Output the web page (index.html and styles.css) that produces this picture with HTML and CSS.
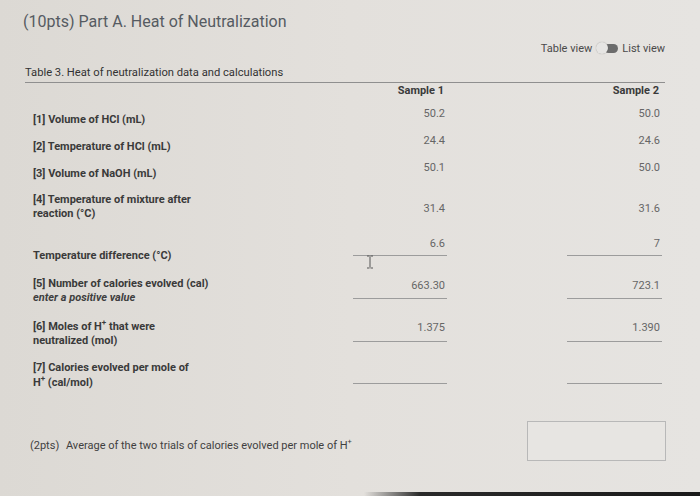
FILE: index.html
```html
<!DOCTYPE html>
<html>
<head>
<meta charset="utf-8">
<link rel="stylesheet" href="styles.css">
</head>
<body>
<div class="page">
  <h1 class="title">(10pts) Part A. Heat of Neutralization</h1>
  <div class="viewbar">
    <span class="vlabel">Table view</span>
    <span class="toggle"><span class="track"></span><span class="knob"></span></span>
    <span class="vlabel">List view</span>
  </div>
  <div class="caption">Table 3. Heat of neutralization data and calculations</div>

  <div class="row head">
    <div></div>
    <div class="val">Sample 1</div>
    <div></div>
    <div class="val">Sample 2</div>
  </div>

  <div class="row r1">
    <div class="lbl">[1] Volume of HCl (mL)</div>
    <div class="val">50.2</div>
    <div></div>
    <div class="val">50.0</div>
  </div>
  <div class="row r2">
    <div class="lbl">[2] Temperature of HCl (mL)</div>
    <div class="val">24.4</div>
    <div></div>
    <div class="val">24.6</div>
  </div>
  <div class="row r3">
    <div class="lbl">[3] Volume of NaOH (mL)</div>
    <div class="val">50.1</div>
    <div></div>
    <div class="val">50.0</div>
  </div>
  <div class="row r4">
    <div class="lbl">[4] Temperature of mixture after<br>reaction (°C)</div>
    <div class="val">31.4</div>
    <div></div>
    <div class="val">31.6</div>
  </div>
  <div class="row r5">
    <div class="lbl">Temperature difference (°C)</div>
    <div class="val field">6.6</div>
    <div></div>
    <div class="val field">7</div>
  </div>
  <div class="row r6">
    <div class="lbl">[5] Number of calories evolved (cal)<br><i class="hint">enter a positive value</i></div>
    <div class="val field">663.30</div>
    <div></div>
    <div class="val field">723.1</div>
  </div>
  <div class="row r7">
    <div class="lbl">[6] Moles of H<sup>+</sup> that were<br>neutralized (mol)</div>
    <div class="val field">1.375</div>
    <div></div>
    <div class="val field">1.390</div>
  </div>
  <div class="row r8">
    <div class="lbl">[7] Calories evolved per mole of<br>H<sup>+</sup> (cal/mol)</div>
    <div class="val field"></div>
    <div></div>
    <div class="val field"></div>
  </div>

  <div class="avg">
    <div class="avgtext"><span class="pts">(2pts)</span> Average of the two trials of calories evolved per mole of H<sup>+</sup></div>
    <div class="avgbox"></div>
  </div>

  <svg class="ibeam" width="8" height="14" viewBox="0 0 8 14"><path d="M1 1h2.5M4.5 1h2.5M4 1.5v11M1 13h2.5M4.5 13h2.5" stroke="#555" stroke-width="1" fill="none"/></svg>
  <div class="edge"></div>
</div>
</body>
</html>
```
FILE: styles.css
```css
html, body {
  margin: 0;
  padding: 0;
}
body {
  width: 700px;
  height: 496px;
  overflow: hidden;
  background: linear-gradient(90deg, #dcd9d4 0%, #e3e0dc 50%, #e6e4e1 100%);
  font-family: Roboto, "Liberation Sans", sans-serif;
}
.page {
  position: relative;
  height: 496px;
}
.title {
  margin: 0;
  padding: 12px 0 0 23px;
  font-size: 16px;
  font-weight: 400;
  color: #565b62;
  line-height: 20px;
}
.viewbar {
  display: flex;
  align-items: center;
  justify-content: flex-end;
  padding: 9px 35px 0 0;
  height: 14px;
  font-size: 11px;
  color: #4a4a4a;
}
.toggle {
  position: relative;
  width: 24px;
  height: 12px;
  margin: 0 2px 0 4px;
}
.track {
  position: absolute;
  left: 8px;
  top: 2px;
  width: 14px;
  height: 9px;
  border-radius: 5px;
  background: #6c6c6c;
}
.knob {
  position: absolute;
  left: 0;
  top: 0;
  width: 12px;
  height: 12px;
  border-radius: 50%;
  background: #e6e5e3;
  box-shadow: 0 0 1px rgba(0,0,0,0.35);
}
.caption {
  margin: 11px 35px 0 25px;
  padding-bottom: 2px;
  border-bottom: 1px solid #8f8f8f;
  font-size: 11.2px;
  line-height: 14px;
  color: #333;
}
.row {
  display: grid;
  grid-template-columns: 320px 94px 120px 95px;
  padding-left: 33px;
  align-items: start;
}
.lbl {
  font-size: 11px;
  font-weight: 700;
  color: #3a3a3a;
  line-height: 14px;
}
.lbl sup {
  font-size: 8px;
  line-height: 0;
}
.hint {
  font-weight: 700;
  color: #3f3f3f;
}
.val {
  text-align: right;
  font-size: 11px;
  line-height: 14px;
  color: #666;
  padding-right: 2px;
}
.head .val {
  font-weight: 700;
  color: #3a3a3a;
  padding-right: 3px;
}
.head { padding-top: 1px; height: 22px; }
.field {
  border-bottom: 1px solid #9c9c9c;
}
.r1, .r2 { height: 27px; }
.r3 { height: 27px; }
.r1 .lbl, .r2 .lbl, .r3 .lbl { padding-top: 7px; }
.r1 .val, .r2 .val, .r3 .val { padding-top: 1px; }
.r4 { height: 48px; }
.r4 .lbl { padding-top: 6px; }
.r4 .val { padding-top: 15px; }
.r5 { height: 40px; }
.r5 .lbl { padding-top: 14px; }
.r5 .val { padding-top: 2px; height: 18px; }
.r6 { height: 43px; }
.r6 .lbl { padding-top: 2px; }
.r6 .val { padding-top: 4px; height: 19px; }
.r7 { height: 40px; }
.r7 .lbl { padding-top: 2px; }
.r7 .val { padding-top: 3px; height: 20px; }
.r8 .lbl { padding-top: 2px; line-height: 15px; }
.r8 .val { padding-top: 3px; height: 22px; }
.avg {
  display: flex;
  align-items: center;
  justify-content: space-between;
  margin: 31px 34px 0 30px;
}
.avgtext {
  font-family: "Liberation Sans Narrow", Roboto, sans-serif;
  font-size: 11px;
  color: #3f3f3f;
  padding-top: 8px;
}
.avgtext sup { font-size: 7.5px; line-height: 0; }
.pts { margin-right: 4px; }
.avgbox {
  width: 137px;
  height: 38px;
  border: 1px solid #b8b8b8;
  background: #e7e5e2;
}
.ibeam {
  position: absolute;
  left: 366px;
  top: 255px;
}
.edge {
  position: absolute;
  left: 0;
  right: 0;
  bottom: 0;
  height: 4px;
  background: linear-gradient(90deg, rgba(40,40,40,0) 0%, rgba(40,40,40,0) 52%, #2a2a2a 60%, #1a1a1a 100%);
}
```
